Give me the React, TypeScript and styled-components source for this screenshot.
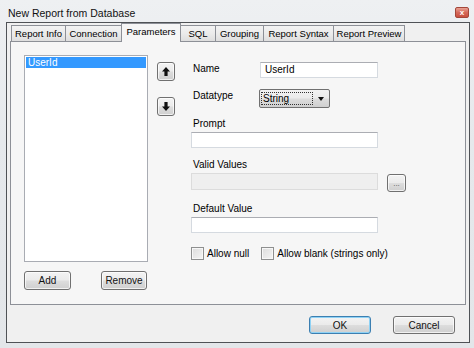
import React from "react";
import styled, { createGlobalStyle, css } from "styled-components";

const Global = createGlobalStyle`
  html, body { margin: 0; padding: 0; }
  body {
    background: #e4e7ea;
    font-family: "Liberation Sans", Arial, sans-serif;
    font-size: 10px;
    color: #000;
  }
`;

const Window = styled.div`
  width: 474px;
  height: 348px;
  box-sizing: border-box;
  padding: 0 4px 5px 6px;
  display: flex;
  flex-direction: column;
  background: linear-gradient(180deg, #eef0f2 0%, #e6e9ec 40%, #e3e6e9 100%);
`;

const TitleBar = styled.div`
  height: 22px;
  display: flex;
  align-items: flex-start;
  justify-content: space-between;
`;

const Title = styled.div`
  font-size: 10.5px;
  line-height: 12px;
  margin: 7px 0 0 2px;
  color: #111;
`;

const CloseBtn = styled.div`
  width: 14px;
  height: 11px;
  margin: 7px 1px 0 0;
  border-radius: 2px;
  border: 1px solid #a3473a;
  box-sizing: border-box;
  background: linear-gradient(180deg, #e9a193 0%, #d5695a 50%, #c9503f 100%);
  color: #fff;
  font-size: 8px;
  font-weight: bold;
  line-height: 9px;
  text-align: center;
`;

const Client = styled.div`
  flex: 1;
  border: 1px solid #4f5256;
  background: #f0f0f0;
  display: flex;
  flex-direction: column;
`;

const TabArea = styled.div`
  margin: 0 3px;
  display: flex;
  flex-direction: column;
`;

const TabStrip = styled.div`
  height: 18px;
  display: flex;
  align-items: flex-end;
  padding-left: 1px;
`;

const Tab = styled.div<{ $w: number; $active?: boolean }>`
  width: ${(p) => p.$w}px;
  box-sizing: border-box;
  border: 1px solid #8d9097;
  border-bottom: none;
  margin-left: -1px;
  &:first-child { margin-left: 0; }
  font-size: 9.5px;
  text-align: center;
  white-space: nowrap;
  ${(p) =>
    p.$active
      ? css`
          height: 19px;
          margin-bottom: -1px;
          line-height: 15px;
          background: #f6f6f6;
          position: relative;
          z-index: 1;
        `
      : css`
          height: 16px;
          line-height: 15px;
          background: linear-gradient(180deg, #f3f3f3 0%, #ebebeb 50%, #dedede 100%);
        `}
`;

const Panel = styled.div`
  height: 264px;
  box-sizing: border-box;
  border: 1px solid #8d9097;
  background: #f6f6f6;
  display: flex;
  padding: 13px 0 0 13px;
`;

const LeftCol = styled.div`
  width: 124px;
  flex-shrink: 0;
  display: flex;
  flex-direction: column;
`;

const ListBox = styled.div`
  height: 207px;
  box-sizing: border-box;
  border: 1px solid #a9acb3;
  background: #fff;
  padding: 1px;
`;

const ListItem = styled.div<{ $selected?: boolean }>`
  height: 11px;
  line-height: 11px;
  padding-left: 2px;
  ${(p) =>
    p.$selected &&
    css`
      background: #3399ff;
      color: #fff;
    `}
`;

const ButtonRow = styled.div`
  display: flex;
  justify-content: space-between;
  margin-top: 9px;
  padding-right: 1px;
`;

const Button = styled.button<{ $w: number; $h?: number; $default?: boolean }>`
  width: ${(p) => p.$w}px;
  height: ${(p) => p.$h ?? 19}px;
  flex-shrink: 0;
  box-sizing: border-box;
  padding: 0;
  font-family: "Liberation Sans", Arial, sans-serif;
  font-size: 10px;
  color: #111;
  border: 1px solid #707070;
  border-radius: 3px;
  background: linear-gradient(180deg, #f3f3f3 0%, #ebebeb 48%, #dddddd 52%, #cfcfcf 100%);
  box-shadow: inset 0 0 0 1px rgba(255, 255, 255, 0.7);
  display: flex;
  align-items: center;
  justify-content: center;
  ${(p) =>
    p.$default &&
    css`
      border-color: #3c7fb1;
      box-shadow: inset 0 0 0 1px #8fd2f5;
    `}
`;

const MoveCol = styled.div`
  margin-left: 9px;
  padding-top: 7px;
  display: flex;
  flex-direction: column;
  gap: 16px;
`;

const Form = styled.div`
  margin-left: 16px;
  width: 187px;
  flex-shrink: 0;
  padding-top: 7px;
  display: flex;
  flex-direction: column;
`;

const FieldRow = styled.div<{ $h: number; $mt?: number }>`
  height: ${(p) => p.$h}px;
  margin-top: ${(p) => p.$mt ?? 0}px;
  display: flex;
  align-items: flex-start;
`;

const RowLabel = styled.div<{ $w: number }>`
  width: ${(p) => p.$w}px;
  flex-shrink: 0;
  padding-left: 2px;
  box-sizing: border-box;
  line-height: 12px;
  padding-top: 1px;
`;

const Label = styled.div<{ $mt: number }>`
  margin-top: ${(p) => p.$mt}px;
  padding-left: 2px;
  line-height: 12px;
  height: 12px;
`;

const TextBox = styled.div<{ $w: number; $h?: number; $mt?: number; $disabled?: boolean }>`
  width: ${(p) => p.$w}px;
  height: ${(p) => p.$h ?? 16}px;
  flex-shrink: 0;
  margin-top: ${(p) => p.$mt ?? 0}px;
  box-sizing: border-box;
  border: 1px solid #d5dae0;
  border-top-color: #abadb3;
  background: ${(p) => (p.$disabled ? "#efefef" : "#fff")};
  ${(p) => p.$disabled && css`border-color: #dcdcdc;`}
  padding-left: 4px;
  line-height: 14px;
`;

const Select = styled.div`
  width: 71px;
  height: 19px;
  flex-shrink: 0;
  box-sizing: border-box;
  border: 1px solid #707070;
  border-radius: 2px;
  background: linear-gradient(180deg, #f2f2f2 0%, #ebebeb 48%, #dddddd 52%, #cfcfcf 100%);
  display: flex;
  align-items: center;
  padding: 0 5px 0 1px;
  justify-content: space-between;
`;

const SelectValue = styled.div`
  width: 52px;
  height: 13px;
  box-sizing: border-box;
  border: 1px dotted #333;
  line-height: 11px;
  padding-left: 1px;
`;

const Caret = styled.div`
  width: 0;
  height: 0;
  border-left: 3.5px solid transparent;
  border-right: 3.5px solid transparent;
  border-top: 4px solid #111;
`;

const ValidRow = styled.div`
  display: flex;
  align-items: flex-start;
  margin-top: 2px;
`;

const DotsButton = styled(Button)`
  margin: 1px 0 0 9px;
  font-size: 8px;
  color: #555;
  align-items: flex-end;
  padding-bottom: 3px;
`;

const CheckRow = styled.div`
  display: flex;
  align-items: center;
  margin-top: 14px;
  gap: 12px;
  white-space: nowrap;
`;

const CheckItem = styled.label`
  display: flex;
  align-items: center;
  gap: 3px;
  flex-shrink: 0;
`;

const CheckBox = styled.span`
  width: 13px;
  height: 13px;
  flex-shrink: 0;
  box-sizing: border-box;
  border: 1px solid #8e8f8f;
  background: linear-gradient(135deg, #dcdcdc 0%, #f4f4f4 100%);
  box-shadow: inset 0 0 0 1px #f7f7f7;
`;

const Footer = styled.div`
  flex: 1;
  display: flex;
  justify-content: flex-end;
  align-items: flex-start;
  gap: 22px;
  padding: 11px 14px 0 0;
`;

const Arrow = ({ down }: { down?: boolean }) => (
  <svg width="8" height="9" viewBox="0 0 8 9" style={down ? { transform: "rotate(180deg)" } : undefined}>
    <path d="M4 0 L8 4.5 H5.6 V9 H2.4 V4.5 H0 Z" fill="#111" />
  </svg>
);

const tabs = [
  { label: "Report Info", w: 55 },
  { label: "Connection", w: 57 },
  { label: "Parameters", w: 60, active: true },
  { label: "SQL", w: 36 },
  { label: "Grouping", w: 49 },
  { label: "Report Syntax", w: 71 },
  { label: "Report Preview", w: 72 },
];

export default function App() {
  return (
    <>
      <Global />
      <Window>
        <TitleBar>
          <Title>New Report from Database</Title>
          <CloseBtn>x</CloseBtn>
        </TitleBar>
        <Client>
          <TabArea>
            <TabStrip>
              {tabs.map((t) => (
                <Tab key={t.label} $w={t.w} $active={t.active}>
                  {t.label}
                </Tab>
              ))}
            </TabStrip>
            <Panel>
              <LeftCol>
                <ListBox>
                  <ListItem $selected>UserId</ListItem>
                </ListBox>
                <ButtonRow>
                  <Button $w={47}>Add</Button>
                  <Button $w={46}>Remove</Button>
                </ButtonRow>
              </LeftCol>
              <MoveCol>
                <Button $w={18} $h={19}>
                  <Arrow />
                </Button>
                <Button $w={18} $h={19}>
                  <Arrow down />
                </Button>
              </MoveCol>
              <Form>
                <FieldRow $h={16}>
                  <RowLabel $w={69}>Name</RowLabel>
                  <TextBox $w={118}>UserId</TextBox>
                </FieldRow>
                <FieldRow $h={19} $mt={11}>
                  <RowLabel $w={68}>Datatype</RowLabel>
                  <Select>
                    <SelectValue>String</SelectValue>
                    <Caret />
                  </Select>
                </FieldRow>
                <Label $mt={10}>Prompt</Label>
                <TextBox $w={187} $mt={2} />
                <Label $mt={11}>Valid Values</Label>
                <ValidRow>
                  <TextBox $w={187} $h={17} $disabled />
                  <DotsButton $w={19} $h={18}>...</DotsButton>
                </ValidRow>
                <Label $mt={11}>Default Value</Label>
                <TextBox $w={187} $mt={2} />
                <CheckRow>
                  <CheckItem>
                    <CheckBox />
                    Allow null
                  </CheckItem>
                  <CheckItem>
                    <CheckBox />
                    Allow blank (strings only)
                  </CheckItem>
                </CheckRow>
              </Form>
            </Panel>
          </TabArea>
          <Footer>
            <Button $w={62} $h={18} $default>
              OK
            </Button>
            <Button $w={62} $h={18}>
              Cancel
            </Button>
          </Footer>
        </Client>
      </Window>
    </>
  );
}
